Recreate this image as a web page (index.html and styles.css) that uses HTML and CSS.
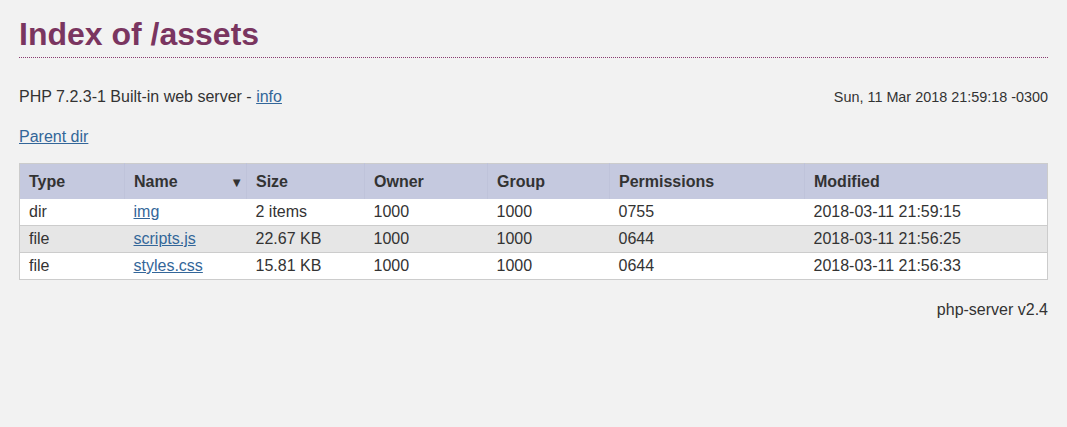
FILE: index.html
```html
<!DOCTYPE html>
<html>
<head>
<meta charset="utf-8">
<title>Index of /assets</title>
<link rel="stylesheet" href="styles.css">
</head>
<body>
<div class="page">
  <h1 class="title">Index of /assets</h1>
  <div class="info-row">
    <span class="server">PHP 7.2.3-1 Built-in web server - <a href="#">info</a></span>
    <span class="date">Sun, 11 Mar 2018 21:59:18 -0300</span>
  </div>
  <p class="parent"><a href="#">Parent dir</a></p>
  <table class="listing">
    <colgroup>
      <col class="c-type"><col class="c-name"><col class="c-size"><col class="c-owner"><col class="c-group"><col class="c-perm"><col class="c-mod">
    </colgroup>
    <thead>
      <tr>
        <th>Type</th>
        <th class="sorted"><span>Name</span><span class="arrow">▼</span></th>
        <th>Size</th>
        <th>Owner</th>
        <th>Group</th>
        <th>Permissions</th>
        <th>Modified</th>
      </tr>
    </thead>
    <tbody>
      <tr>
        <td>dir</td><td><a href="#">img</a></td><td>2 items</td><td>1000</td><td>1000</td><td>0755</td><td>2018-03-11 21:59:15</td>
      </tr>
      <tr class="alt">
        <td>file</td><td><a href="#">scripts.js</a></td><td>22.67 KB</td><td>1000</td><td>1000</td><td>0644</td><td>2018-03-11 21:56:25</td>
      </tr>
      <tr>
        <td>file</td><td><a href="#">styles.css</a></td><td>15.81 KB</td><td>1000</td><td>1000</td><td>0644</td><td>2018-03-11 21:56:33</td>
      </tr>
    </tbody>
  </table>
  <div class="footer">php-server v2.4</div>
</div>
</body>
</html>
```
FILE: styles.css
```css
html, body {
  margin: 0;
  padding: 0;
  background: #f2f2f2;
}
body {
  font-family: "Liberation Sans", Arial, sans-serif;
  font-size: 16px;
  color: #333333;
}
a {
  color: #336699;
  text-decoration: underline;
}
.page {
  padding: 16px 19px 0 19px;
}
.title {
  margin: 0;
  font-size: 32px;
  font-weight: bold;
  color: #7a3560;
  padding-bottom: 4px;
  border-bottom: 1px dotted #8a3c70;
}
.info-row {
  margin-top: 30px;
  display: flex;
  justify-content: space-between;
  align-items: baseline;
}
.date {
  font-size: 14.4px;
}
.parent {
  margin: 22px 0 0 0;
}
.listing {
  margin-top: 17px;
  width: 100%;
  border-collapse: collapse;
  border: 1px solid #cccccc;
  table-layout: fixed;
}
.c-type { width: 105px; }
.c-name { width: 122px; }
.c-size { width: 118px; }
.c-owner { width: 123px; }
.c-group { width: 122px; }
.c-perm { width: 195px; }
.listing th {
  background: #c5c9df;
  text-align: left;
  font-weight: bold;
  padding: 9px 9px 8px 9px;
  border-left: 1px solid #bfc3da;
}
.listing th:first-child {
  border-left: none;
}
.sorted .arrow {
  float: right;
  font-size: 13px;
  margin-top: 2px;
  margin-right: -6px;
}
.listing td {
  padding: 4px 9px;
  background: #ffffff;
  border-top: 1px solid #cccccc;
}
.listing thead + tbody tr:first-child td {
  border-top: none;
}
.listing tr.alt td {
  background: #e6e6e6;
}
.footer {
  text-align: right;
  margin-top: 21px;
}
```
